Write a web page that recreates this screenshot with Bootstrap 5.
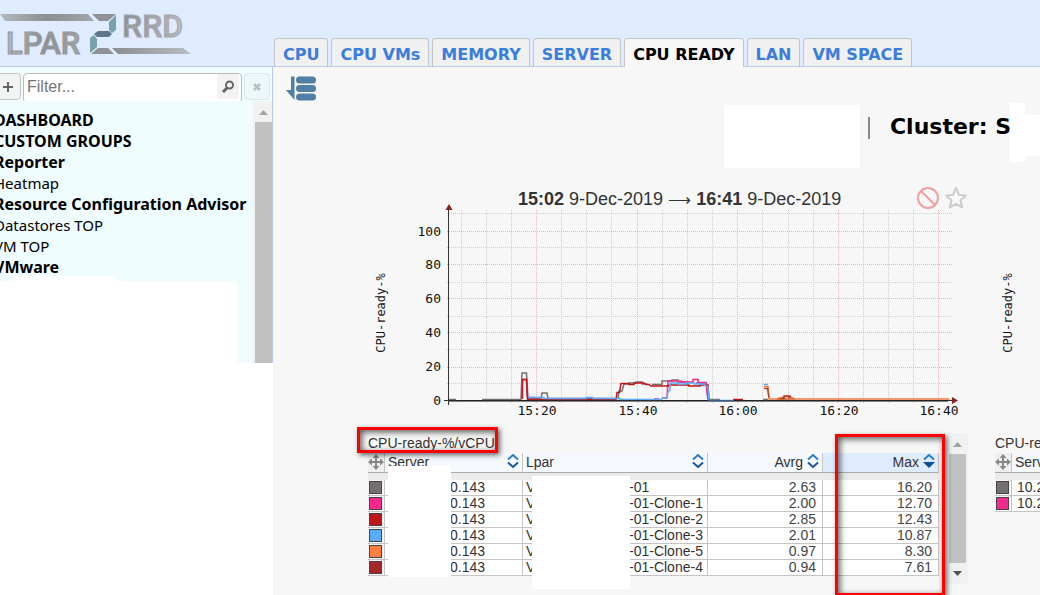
<!DOCTYPE html>
<html lang="en">
<head>
<meta charset="utf-8">
<meta name="viewport" content="width=device-width, initial-scale=1">
<title>LPAR2RRD</title>
<link href="https://cdn.jsdelivr.net/npm/bootstrap@5.3.0/dist/css/bootstrap.min.css" rel="stylesheet">
<style>
  body { background: #fff; color: #000; font-family: "Liberation Sans", Arial, sans-serif; font-size: 14px; overflow: hidden; }
  svg { display: block; }
  .topbar { background: #dfebff; border-bottom: 1px solid #b5cbe8; height: 67px; }
  .brand-col, .side { width: 273px; flex: none; }
  .brand-col { padding-top: 12px; }
  .view-tabs { gap: 3px; padding-left: 1px; margin-bottom: -1px; }
  .view-tabs a { display: block; height: 28px; padding: 0 8px; border: 1px solid #c5c5c5; border-bottom: 0; border-radius: 4px 4px 0 0;
    background: #f0f0f0; color: #3b7ddd; font: bold 16px/31px "DejaVu Sans", Verdana, sans-serif; text-decoration: none; white-space: nowrap; margin-bottom: 1px; }
  .view-tabs a.active { background: #f7f7f7; color: #000; height: 29px; margin-bottom: 0; }
  .side-in { background: #f0fdff; border-right: 1px solid #b9c9ea; }
  .filter-row { height: 34px; padding: 6px 2px 0 0; gap: 2px; overflow: hidden; }
  .tool-btn { width: 26px; height: 27px; padding: 0; border: 1px solid #c5c5c5; border-radius: 4px; background: #f2f4f4; display: grid; place-items: center; flex: none; }
  .tool-btn.plus { margin-left: -5px; }
  .tool-btn.clear { border-color: #d8e8ea; background: #ebf7f9; }
  .filter-box { border: 1px solid #bbb; border-radius: 4px; background: #fff; height: 30px; min-width: 0; }
  .filter-box input { border: 0; outline: 0; background: transparent; font-size: 16px; line-height: 24px; height: 25px; padding: 0 3px; min-width: 0; color: #333; }
  .filter-box input::placeholder { color: #757575; }
  .filter-box button { border: 0; background: #f3f3f3; width: 24px; height: 25px; padding: 0; display: grid; place-items: center; border-radius: 3px; margin-right: 2px; }
  .tree { padding-top: 9px; height: 262px; overflow: hidden; min-width: 0; }
  .tree a { display: block; margin-left: -6px; color: #000; text-decoration: none; white-space: nowrap; font: 15px/21px "Noto Sans", Tahoma, sans-serif; }
  .tree a.group { font-size: 16px; font-weight: bold; }
  .hidden-names { background: #fff; height: 90px; margin: 3px 15px 0 0; position: relative; }
  .hidden-names::before { content: ""; position: absolute; left: 14px; top: -5px; width: 102px; height: 5px; background: #fff; }
  .scroll { background: #f1f1f1; flex: none; display: flex; flex-direction: column; align-items: center; }
  .scroll i { display: block; background: #c1c1c1; width: 17px; flex: 1; }
  .scroll-side { width: 19px; padding-left: 2px; }
  .page { background: #f7f7f7; min-height: calc(100vh - 67px); min-width: 0; overflow: hidden; border-left: 1px solid #f4f4f4; }
  .menu-row { padding: 8px 0 0 12px; }
  .blank { background: #fff; }
  .blank-name { width: 136px; height: 63px; margin-top: 2px; }
  .blank-mid { width: 15px; height: 59px; }
  .blank-end { width: 15px; height: 41px; margin-top: 12px; }
  .title-row { height: 65px; }
  .title-row h1 { font: bold 22px/48px "DejaVu Sans", Verdana, sans-serif; margin: 0 -1px 0 0; white-space: nowrap; }
  .title-row .bar { width: 2px; height: 22px; background: #888; margin: 14px 20px 0 8px; }
  .panels { padding: 19px 0 0 84px; }
  .panel-g { width: 627px; flex: none; }
  .range { height: 24px; line-height: 24px; font-size: 18px; color: #333; padding-left: 160px; white-space: nowrap; }
  .range .arrow { font-size: 16px; }
  .range .marks { margin: 0 17px 0 auto; gap: 4px; }
  .plot { margin-top: -7px; }
  .plot text { font-family: "DejaVu Sans Mono", monospace; font-size: 13px; fill: #111; }
  .plot text.unit { font-size: 12px; }
  .legend-box { padding: 14px 0 0 10px; }
  .legend-box caption { caption-side: top; padding: 0; color: #333; line-height: 20px; height: 20px; white-space: nowrap; }
  .leg { table-layout: fixed; width: 571px; border-collapse: separate; border-spacing: 0; color: #333; flex: none; }
  .leg.pair { width: 155px; }
  .leg th { height: 20px; padding: 0; font-weight: normal; border-right: 1px solid #c5c5c5; border-bottom: 1px solid #aaa; background: #f5f8fd; vertical-align: top; }
  .leg th:first-child { background: #efefef; }
  .leg th.sorted { background: #dfebff; }
  .leg th button { border: 0; background: none; padding: 0 3px; width: 100%; height: 19px; line-height: 19px; display: flex; align-items: center; gap: 4px; color: #333; }
  .leg th button svg { margin-bottom: 4px; }
  .leg thead tr + tr td { height: 7px; padding: 0; background: #ebebeb; }
  .leg tbody td { height: 16px; line-height: 14px; padding: 0 4px 0 3px; vertical-align: top; background: #fff; border-right: 1px solid #c5c5c5; border-bottom: 1px solid #c5c5c5; white-space: nowrap; overflow: hidden; }
  .leg tbody td:first-child { padding: 1px 0 0 1px; background: #f7f7f7; }
  .leg td.num { text-align: right; padding-right: 6px; color: #444; }
  .leg td.srv { padding-left: 65px; }
  .pair td.srv { padding-left: 5px; }
  .leg td span { display: inline-block; width: 103px; vertical-align: top; }
  .key { display: block; width: 13px; height: 13px; border: 1px solid #444; }
  .scroll-leg { width: 21px; height: 151px; margin-left: 8px; }
  .cover { position: absolute; background: #fff; }
  .cover-a { left: 30px; top: 47px; width: 63px; height: 111px; }
  .cover-b { left: 174px; top: 57px; width: 98px; height: 113px; }
  .ring { position: absolute; border: 3px solid #f00; pointer-events: none; box-shadow: 2px 2px 5px rgba(0,0,0,.6), inset 2px 2px 6px rgba(0,0,0,.65); }
  .ring-a { left: -1px; top: 8px; width: 141px; height: 26px; }
  .ring-b { left: 477px; top: 15px; width: 110px; height: 162px; }
</style>
</head>
<body>
<svg width="0" height="0" class="position-absolute" aria-hidden="true">
  <symbol id="move" viewBox="0 0 16 16"><path d="M8 0l3.500 4H9v3h3V4.500L16 8l-4 3.500V9H9v3h2.500L8 16l-3.500-4H7V9H4v2.500L0 8l4-3.500V7h3V4H4.500z" fill="#888"/></symbol>
  <symbol id="sort" viewBox="0 0 12 14"><path d="M1 5.500L6 1l5 4.500" fill="none" stroke="#2a7fc4" stroke-width="2"/><path d="M1 8.500L6 13l5-4.500" fill="none" stroke="#1d56a8" stroke-width="2"/></symbol>
  <symbol id="sort-down" viewBox="0 0 12 14"><path d="M1 5.500L6 1l5 4.500" fill="none" stroke="#2a7fc4" stroke-width="2"/><path d="M0 8h12L6 14z" fill="#0d4c9c"/></symbol>
</svg>

<header class="topbar d-flex">
  <div class="brand-col">
    <svg width="195" height="46" viewBox="0 12 195 46" role="img" aria-label="LPAR2RRD">
      <defs>
        <linearGradient id="g1"><stop offset="0" stop-color="#b5b8bd"/><stop offset=".5" stop-color="#8b8e93"/><stop offset="1" stop-color="#a2a5a9"/></linearGradient>
        <linearGradient id="g2"><stop offset="0" stop-color="#898c90"/><stop offset="1" stop-color="#b9bdc2"/></linearGradient>
      </defs>
      <path d="M0 14h88l6 7H5z" fill="url(#g1)"/>
      <path d="M92 14h24l-8 7h-9z" fill="#8f9296"/>
      <path d="M116 15v15l-4 3-3-3v-8z" fill="#76a3ae"/>
      <path d="M94 34l4-3h11l3 3-3 3H97z" fill="#5f7789"/>
      <path d="M90 38l4-3 3 4v8l-7 6z" fill="#76a3ae"/>
      <path d="M91 54l7-6h10l6 6z" fill="#8f9296"/>
      <path d="M112 48h71l8 6h-73z" fill="url(#g2)"/>
      <text x="6" y="54" font-family="Roboto" font-weight="500" font-size="31" fill="url(#g1)" stroke="#96999d">LPAR</text>
      <text x="122" y="37" font-family="Roboto" font-weight="500" font-size="32" fill="url(#g2)" stroke="#a4a7ac">RRD</text>
    </svg>
  </div>
  <nav class="view-tabs d-flex align-items-end" aria-label="Views">
    <a href="#">CPU</a><a href="#">CPU VMs</a><a href="#">MEMORY</a><a href="#">SERVER</a><a href="#" class="active" aria-current="page">CPU READY</a><a href="#">LAN</a><a href="#">VM SPACE</a>
  </nav>
</header>

<div class="d-flex">
  <aside class="side">
    <div class="side-in">
      <div class="filter-row d-flex">
        <button class="tool-btn plus" type="button" aria-label="Expand"><svg width="12" height="12" viewBox="0 0 12 12"><path d="M6 1v10M1 6h10" stroke="#666" stroke-width="2"/></svg></button>
        <div class="filter-box d-flex flex-grow-1">
          <input class="flex-grow-1" type="text" placeholder="Filter..." aria-label="Filter">
          <button type="button" aria-label="Search"><svg width="14" height="14" viewBox="0 0 14 14"><circle cx="8.500" cy="5" r="3.500" fill="none" stroke="#666" stroke-width="2"/><path d="M6 8l-4 4" stroke="#666" stroke-width="3"/></svg></button>
        </div>
        <button class="tool-btn clear" type="button" aria-label="Clear"><svg width="8" height="8" viewBox="0 0 8 8"><path d="M1 1l6 6M7 1L1 7" stroke="#b5bfc0" stroke-width="2.500"/></svg></button>
      </div>
      <div class="d-flex">
        <nav class="tree flex-grow-1" aria-label="Tree">
          <a class="group" href="#">DASHBOARD</a>
          <a class="group" href="#">CUSTOM GROUPS</a>
          <a class="group" href="#">Reporter</a>
          <a href="#">Heatmap</a>
          <a class="group" href="#">Resource Configuration Advisor</a>
          <a href="#">Datastores TOP</a>
          <a href="#">VM TOP</a>
          <a class="group" href="#">VMware</a>
          <div class="hidden-names"></div>
        </nav>
        <div class="scroll scroll-side" aria-hidden="true">
          <svg width="17" height="21" viewBox="0 0 17 21"><path d="M4 14l4.500-5 4.500 5z" fill="#a3a3a3"/></svg><i></i>
        </div>
      </div>
    </div>
  </aside>

  <main class="page flex-grow-1">
    <div class="menu-row">
      <button type="button" class="border-0 bg-transparent p-0 d-block" aria-label="Toggle menu">
        <svg width="32" height="28" viewBox="-4 0 32 28"><g fill="#527ea3"><rect x="6" y="1.500" width="20" height="7" rx="3.500"/><rect x="6" y="10" width="20" height="7" rx="3.500"/><rect x="6" y="18.500" width="20" height="7" rx="3.500"/><path d="M1 1.500h3.500V25L-4 15h5z"/></g></svg>
      </button>
    </div>
    <div class="title-row d-flex justify-content-end">
      <div class="blank blank-name"></div>
      <div class="bar"></div>
      <h1>Cluster: S</h1>
      <div class="blank blank-mid"></div>
      <div class="blank blank-end"></div>
    </div>

    <div class="panels d-flex">
      <section class="panel-g">
        <div class="range d-flex">
          <span><b>15:02</b> 9-Dec-2019 <span class="arrow">⟶</span> <b>16:41</b> 9-Dec-2019</span>
          <div class="marks d-flex">
            <svg width="24" height="24" viewBox="0 1 24 24"><circle cx="12" cy="12" r="10" fill="none" stroke="#f0a0a0" stroke-width="2"/><path d="M5 5l14 14" stroke="#f0a0a0" stroke-width="2"/></svg>
            <svg width="24" height="24" viewBox="0 1 24 24"><path d="M12 2l3 7 7 .6-5.500 4.800 1.700 7.100L12 17.800l-6.200 3.700 1.700-7.100L2 9.600 9 9z" fill="#f9f9f9" stroke="#ccc" stroke-width="2" stroke-linejoin="round"/></svg>
          </div>
        </div>
        <svg class="plot" width="610" height="215" viewBox="358 204 610 215" role="img" aria-label="CPU-ready-% by time">
          <g fill="none" stroke="#cfcfcf" stroke-dasharray="1 1">
            <path d="M447 213.500h505M447 247.500h505M447 282.500h505M447 316.500h505M447 349.500h505M447 383.500h505"/>
            <path d="M461.500 210v194M486.500 210v194M511.500 210v194M561.500 210v194M586.500 210v194M611.500 210v194M662.500 210v194M687.500 210v194M712.500 210v194M762.500 210v194M788.500 210v194M813.500 210v194M863.500 210v194M888.500 210v194M913.500 210v194"/>
          </g>
          <g fill="none" stroke="#f5b0b0" stroke-dasharray="1 1">
            <path d="M447 231.500h505M447 264.500h505M447 298.500h505M447 332.500h505M447 367.500h505"/>
            <path d="M536.500 210v194M637.500 210v194M737.500 210v194M838.500 210v194M938.500 210v194"/>
          </g>
          <path d="M448.500 208v197M444 400.500h508" stroke="#333" fill="none"/>
          <path d="M445.500 210l3.500-6 3.500 6zM952 397l6 3.500-6 3.500z" fill="#8b2020"/>
          <g fill="none" stroke-width="1.500">
            <path d="M449 399.500h7M482 399.500h39l1-26.500h4.500l1.500 25.500h13l1-5.500h5l1 5.500h70l1-7.500h3l2-7h5v-1h7v-1h6v2h5M652 384.500h10v-3.500h10v-1h6v2h10v2M696 383h10l2 16.500h12M763 399.500h5M780 399h15" stroke="#75706f"/>
            <path d="M522 398v-18.500h4.500l1 18h8M654 399h5M662 398h5l1-17h13v1h12v-2.500h5v3h8l2 16.500" stroke="#f5278a"/>
            <path d="M522.500 399v-19.500h4l1 20H616l1-7h2.500l1.500-9h8v1h5v-1.500h10l2 1.500h3l2 1.500h18v-1h20v1h11v-1h8l1 15M733 399.500h10M777 399h6l2-3h5l2 3" stroke="#be1717"/>
            <path d="M528 397.500h16v1h42v-1h7v1h27v1h41l2-1.500h4l1-6 2-2v-7h8v1h8v-1h8v1h11v1l3 2 1 13.500h25M764 384.500h4M788 398.500h6" stroke="#58adff"/>
            <path d="M764 386.500h4l1 12.500h180M778 398h4l2-2h5v2h5" stroke="#f07a40"/>
            <path d="M764 388.500h3.500l1.500 9M780 398.500h4v-2h5v2" stroke="#b0412b"/>
          </g>
          <path d="M449 401h499" stroke="#111"/>
          <g text-anchor="end"><text x="441" y="236">100</text><text x="441" y="269">80</text><text x="441" y="303">60</text><text x="441" y="337">40</text><text x="441" y="371">20</text><text x="441" y="405">0</text></g>
          <g text-anchor="middle"><text x="537" y="415">15:20</text><text x="638" y="415">15:40</text><text x="738" y="415">16:00</text><text x="839" y="415">16:20</text><text x="939" y="415">16:40</text>
          <text class="unit" transform="translate(385 313) rotate(-90)">CPU-ready-%</text></g>
        </svg>
        <div class="position-relative d-flex align-items-start legend-box">
          <table class="leg">
            <caption>CPU-ready-%/vCPU</caption>
            <colgroup><col style="width:17px"><col style="width:138px"><col style="width:185px"><col style="width:115px"><col style="width:116px"></colgroup>
            <thead>
              <tr>
                <th><svg width="16" height="18"><use href="#move"/></svg></th>
                <th><button type="button">Server<svg class="ms-auto" width="12" height="14"><use href="#sort"/></svg></button></th>
                <th><button type="button">Lpar<svg class="ms-auto" width="12" height="14"><use href="#sort"/></svg></button></th>
                <th><button type="button" class="justify-content-end">Avrg<svg width="12" height="14"><use href="#sort"/></svg></button></th>
                <th class="sorted"><button type="button" class="justify-content-end">Max<svg width="12" height="14"><use href="#sort-down"/></svg></button></th>
              </tr>
              <tr><td colspan="5"></td></tr>
            </thead>
            <tbody>
              <tr><td><i class="key" style="background:#757070"></i></td><td class="srv">0.143</td><td><span>V</span>-01</td><td class="num">2.63</td><td class="num">16.20</td></tr>
              <tr><td><i class="key" style="background:#f9288e"></i></td><td class="srv">0.143</td><td><span>V</span>-01-Clone-1</td><td class="num">2.00</td><td class="num">12.70</td></tr>
              <tr><td><i class="key" style="background:#be1717"></i></td><td class="srv">0.143</td><td><span>V</span>-01-Clone-2</td><td class="num">2.85</td><td class="num">12.43</td></tr>
              <tr><td><i class="key" style="background:#58adff"></i></td><td class="srv">0.143</td><td><span>V</span>-01-Clone-3</td><td class="num">2.01</td><td class="num">10.87</td></tr>
              <tr><td><i class="key" style="background:#ff8040"></i></td><td class="srv">0.143</td><td><span>V</span>-01-Clone-5</td><td class="num">0.97</td><td class="num">8.30</td></tr>
              <tr><td><i class="key" style="background:#a52829"></i></td><td class="srv">0.143</td><td><span>V</span>-01-Clone-4</td><td class="num">0.94</td><td class="num">7.61</td></tr>
            </tbody>
          </table>
          <div class="scroll scroll-leg" aria-hidden="true">
            <svg width="17" height="21" viewBox="0 0 17 21"><path d="M4 14l4.500-5 4.500 5z" fill="#a3a3a3"/></svg><i></i><svg width="17" height="21" viewBox="0 0 17 21"><path d="M4 8l4.500 5 4.500-5z" fill="#505050"/></svg>
          </div>
          <div class="cover cover-a"></div>
          <div class="cover cover-b"></div>
          <div class="ring ring-a"></div>
          <div class="ring ring-b"></div>
        </div>
      </section>

      <section class="panel-g">
        <div class="range"></div>
        <svg class="plot" width="610" height="215" viewBox="358 204 610 215" role="img" aria-label="CPU-ready-%">
          <text class="unit" text-anchor="middle" transform="translate(385 313) rotate(-90)">CPU-ready-%</text>
        </svg>
        <div class="legend-box">
          <table class="leg pair">
            <caption>CPU-ready-%</caption>
            <colgroup><col style="width:17px"><col style="width:138px"></colgroup>
            <thead>
              <tr><th><svg width="16" height="18"><use href="#move"/></svg></th><th><button type="button">Server</button></th></tr>
              <tr><td colspan="2"></td></tr>
            </thead>
            <tbody>
              <tr><td><i class="key" style="background:#757070"></i></td><td class="srv">10.2</td></tr>
              <tr><td><i class="key" style="background:#f9288e"></i></td><td class="srv">10.2</td></tr>
            </tbody>
          </table>
        </div>
      </section>
    </div>
  </main>
</div>
<script src="https://cdn.jsdelivr.net/npm/bootstrap@5.3.0/dist/js/bootstrap.bundle.min.js"></script>
</body>
</html>
